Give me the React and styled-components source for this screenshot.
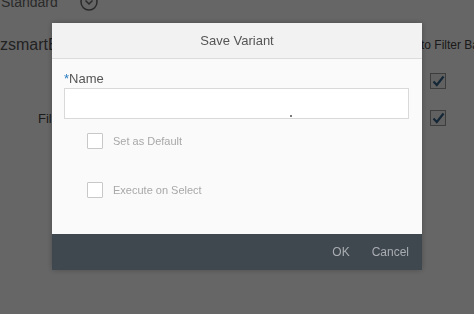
import React from "react";
import styled, { createGlobalStyle } from "styled-components";

const Global = createGlobalStyle`
  html, body { margin: 0; padding: 0; }
  body {
    width: 474px;
    height: 314px;
    overflow: hidden;
    background: #ffffff;
    font-family: "Liberation Sans", Arial, sans-serif;
  }
`;

/* page behind the dialog */
const Page = styled.div`
  width: 474px;
  height: 314px;
  display: flex;
  flex-direction: column;
`;

const TopRow = styled.div`
  display: flex;
  align-items: center;
  gap: 22px;
  height: 22px;
  margin-top: -9px;
  padding-left: 1px;
  font-size: 14px;
  color: #6a6a6a;
`;

const TitleRow = styled.div`
  display: flex;
  align-items: center;
  justify-content: space-between;
  height: 22px;
  margin-top: 21px;
`;

const BigText = styled.span`
  font-size: 16px;
  color: #555;
`;

const SideText = styled.span`
  font-size: 12px;
  color: #444;
  white-space: nowrap;
  width: 53px;
  overflow: hidden;
`;

const CheckRow = styled.div`
  display: flex;
  align-items: center;
  height: 16px;
  margin-top: ${(p) => p.$gap}px;
  padding-left: ${(p) => p.$left}px;
`;

const RowLabel = styled.span`
  font-size: 13px;
  color: #444;
  width: 392px;
`;

const PageCheck = styled.span`
  width: 14px;
  height: 14px;
  border: 1px solid #9a9a9a;
  background: #f3f3f3;
  display: flex;
  align-items: center;
  justify-content: center;
`;

const Overlay = styled.div`
  position: fixed;
  inset: 0;
  background: rgba(0, 0, 0, 0.6);
`;

/* dialog */
const Dialog = styled.div`
  position: fixed;
  left: 52px;
  top: 23px;
  width: 370px;
  height: 247px;
  display: flex;
  flex-direction: column;
  background: #fafafa;
  box-shadow: 0 0 6px rgba(0, 0, 0, 0.25);
`;

const Header = styled.div`
  height: 35px;
  display: flex;
  align-items: center;
  justify-content: center;
  background: #f2f2f2;
  border-bottom: 1px solid #dcdcdc;
  font-size: 13px;
  color: #555;
`;

const Body = styled.div`
  flex: 1;
  display: flex;
  flex-direction: column;
  padding: 13px 13px 0 12px;
`;

const Label = styled.label`
  font-size: 13px;
  color: #555;
  line-height: 14px;
  span {
    color: #2a7cc2;
  }
`;

const Input = styled.div`
  margin-top: 2px;
  height: 29px;
  border: 1px solid #d9d9d9;
  background: #ffffff;
  position: relative;
`;

const Caret = styled.span`
  position: absolute;
  left: 225px;
  top: 26px;
  width: 2px;
  height: 2px;
  background: #7a7a7a;
`;

const Option = styled.div`
  display: flex;
  align-items: center;
  gap: 10px;
  margin-top: ${(p) => p.$top}px;
  padding-left: 23px;
`;

const Box = styled.span`
  width: 14px;
  height: 14px;
  border: 1px solid #c8c8c8;
  background: #ffffff;
  border-radius: 1px;
`;

const OptionText = styled.span`
  font-size: 11px;
  color: #a8a8a8;
`;

const Footer = styled.div`
  height: 36px;
  display: flex;
  align-items: center;
  justify-content: flex-end;
  gap: 22px;
  padding-right: 13px;
  background: #3f474f;
`;

const FooterButton = styled.button`
  border: none;
  background: none;
  padding: 0;
  font-family: inherit;
  font-size: 12px;
  color: #a9adb1;
  cursor: pointer;
`;

const Check = () => (
  <svg width="13" height="12" viewBox="0 0 13 12">
    <path d="M1.5 6.5 L4.8 10 L11.5 1.5" fill="none" stroke="#346187" strokeWidth="2.2" />
  </svg>
);

export default function App() {
  return (
    <>
      <Global />
      <Page>
        <TopRow>
          Standard
          <svg width="18" height="18" viewBox="0 0 18 18">
            <circle cx="9" cy="9" r="8" fill="none" stroke="#6a6a6a" strokeWidth="1.5" />
            <path d="M5.5 7.5 L9 11 L12.5 7.5" fill="none" stroke="#6a6a6a" strokeWidth="1.5" />
          </svg>
        </TopRow>
        <TitleRow>
          <BigText>zsmartBusinessPartner</BigText>
          <SideText>to Filter Bar</SideText>
        </TitleRow>
        <CheckRow $gap={17} $left={430}>
          <PageCheck><Check /></PageCheck>
        </CheckRow>
        <CheckRow $gap={21} $left={38}>
          <RowLabel>Filter</RowLabel>
          <PageCheck><Check /></PageCheck>
        </CheckRow>
      </Page>
      <Overlay />
      <Dialog>
        <Header>Save Variant</Header>
        <Body>
          <Label><span>*</span>Name</Label>
          <Input>
            <Caret />
          </Input>
          <Option $top={14}>
            <Box />
            <OptionText>Set as Default</OptionText>
          </Option>
          <Option $top={33}>
            <Box />
            <OptionText>Execute on Select</OptionText>
          </Option>
        </Body>
        <Footer>
          <FooterButton>OK</FooterButton>
          <FooterButton>Cancel</FooterButton>
        </Footer>
      </Dialog>
    </>
  );
}
